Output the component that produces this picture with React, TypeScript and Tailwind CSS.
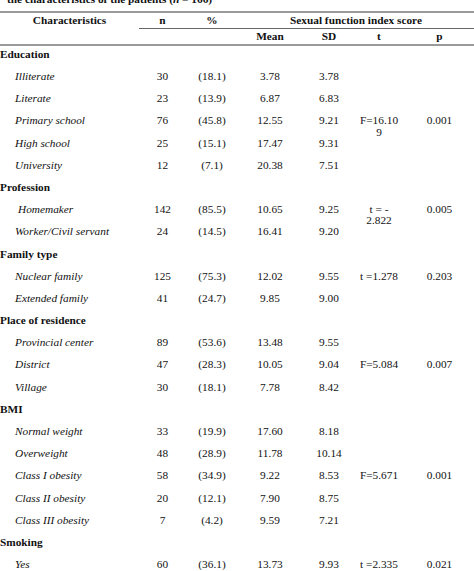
import React from "react";

type Item = [string, number, string, string, string];

type Section = {
  title: string;
  statRow: number;
  t: string[];
  p: string;
  items: Item[];
};

const sections: Section[] = [
  {
    title: "Education",
    statRow: 2,
    t: ["F=16.10", "9"],
    p: "0.001",
    items: [
      ["Illiterate", 30, "(18.1)", "3.78", "3.78"],
      ["Literate", 23, "(13.9)", "6.87", "6.83"],
      ["Primary school", 76, "(45.8)", "12.55", "9.21"],
      ["High school", 25, "(15.1)", "17.47", "9.31"],
      ["University", 12, "(7.1)", "20.38", "7.51"],
    ],
  },
  {
    title: "Profession",
    statRow: 0,
    t: ["t = -", "2.822"],
    p: "0.005",
    items: [
      [" Homemaker", 142, "(85.5)", "10.65", "9.25"],
      ["Worker/Civil servant", 24, "(14.5)", "16.41", "9.20"],
    ],
  },
  {
    title: "Family type",
    statRow: 0,
    t: ["t =1.278"],
    p: "0.203",
    items: [
      ["Nuclear family", 125, "(75.3)", "12.02", "9.55"],
      ["Extended family", 41, "(24.7)", "9.85", "9.00"],
    ],
  },
  {
    title: "Place of residence",
    statRow: 1,
    t: ["F=5.084"],
    p: "0.007",
    items: [
      ["Provincial center", 89, "(53.6)", "13.48", "9.55"],
      ["District", 47, "(28.3)", "10.05", "9.04"],
      ["Village", 30, "(18.1)", "7.78", "8.42"],
    ],
  },
  {
    title: "BMI",
    statRow: 2,
    t: ["F=5.671"],
    p: "0.001",
    items: [
      ["Normal weight", 33, "(19.9)", "17.60", "8.18"],
      ["Overweight", 48, "(28.9)", "11.78", "10.14"],
      ["Class I obesity", 58, "(34.9)", "9.22", "8.53"],
      ["Class II obesity", 20, "(12.1)", "7.90", "8.75"],
      ["Class III obesity", 7, "(4.2)", "9.59", "7.21"],
    ],
  },
  {
    title: "Smoking",
    statRow: 0,
    t: ["t =2.335"],
    p: "0.021",
    items: [["Yes", 60, "(36.1)", "13.73", "9.93"]],
  },
];

const cols = "grid grid-cols-[139px_47px_52px_64px_54px_46px_72px]";

function ItemRow({ item, t, p }: { item: Item; t?: string[]; p?: string }) {
  const [label, n, pct, mean, sd] = item;
  const lead = label.startsWith(" ");
  return (
    <div className={`${cols} h-[22.2px] grid-rows-[22.2px] items-start leading-[22.2px]`}>
      <div className={`italic ${lead ? "pl-[18px]" : "pl-[15px]"}`}>{label.trim()}</div>
      <div className="text-center">{n}</div>
      <div className="text-center">{pct}</div>
      <div className="text-center">{mean}</div>
      <div className="text-center">{sd}</div>
      <div className="text-center">
        {t && (
          <>
            <div>{t[0]}</div>
            {t[1] && <div className="-mt-[7px] leading-[15px]">{t[1]}</div>}
          </>
        )}
      </div>
      <div className="pl-[3px] text-center">{p}</div>
    </div>
  );
}

export default function App() {
  return (
    <div
      className="h-[571px] w-[474px] overflow-hidden bg-white text-[11.3px] text-[#111]"
      style={{ fontFamily: '"Liberation Serif", "Times New Roman", serif' }}
    >
      {/* caption continues from above the crop */}
      <div className="h-[11px] overflow-hidden">
        <p className="-mt-[8px] pl-[7px] font-bold leading-[14px]">
          the characteristics of the patients (<span className="italic">n</span> = 166)
        </p>
      </div>

      <div className="border-t-2 border-b-2 border-[#9a9a9a] font-bold">
        <div className={`${cols} h-[15px] leading-[15px]`}>
          <div className="text-center">Characteristics</div>
          <div className="border-b border-[#666] text-center">n</div>
          <div className="border-b border-[#666] text-center">%</div>
          <div className="col-span-4 border-b border-[#666] text-center">
            Sexual function index score
          </div>
        </div>
        <div className={`${cols} h-[16px] leading-[16px]`}>
          <div />
          <div />
          <div />
          <div className="text-center">Mean</div>
          <div className="text-center">SD</div>
          <div className="text-center">t</div>
          <div className="pl-[3px] text-center">p</div>
        </div>
      </div>

      {sections.map((section, si) => (
        <div key={section.title}>
          <div
            className={`font-bold ${si === 0 ? "h-[19px] leading-[17px]" : "h-[22.2px] leading-[22.2px]"}`}
          >
            {section.title}
          </div>
          {section.items.map((item, i) => (
            <ItemRow
              item={item}
              key={item[0]}
              p={i === section.statRow ? section.p : undefined}
              t={i === section.statRow ? section.t : undefined}
            />
          ))}
        </div>
      ))}
    </div>
  );
}
